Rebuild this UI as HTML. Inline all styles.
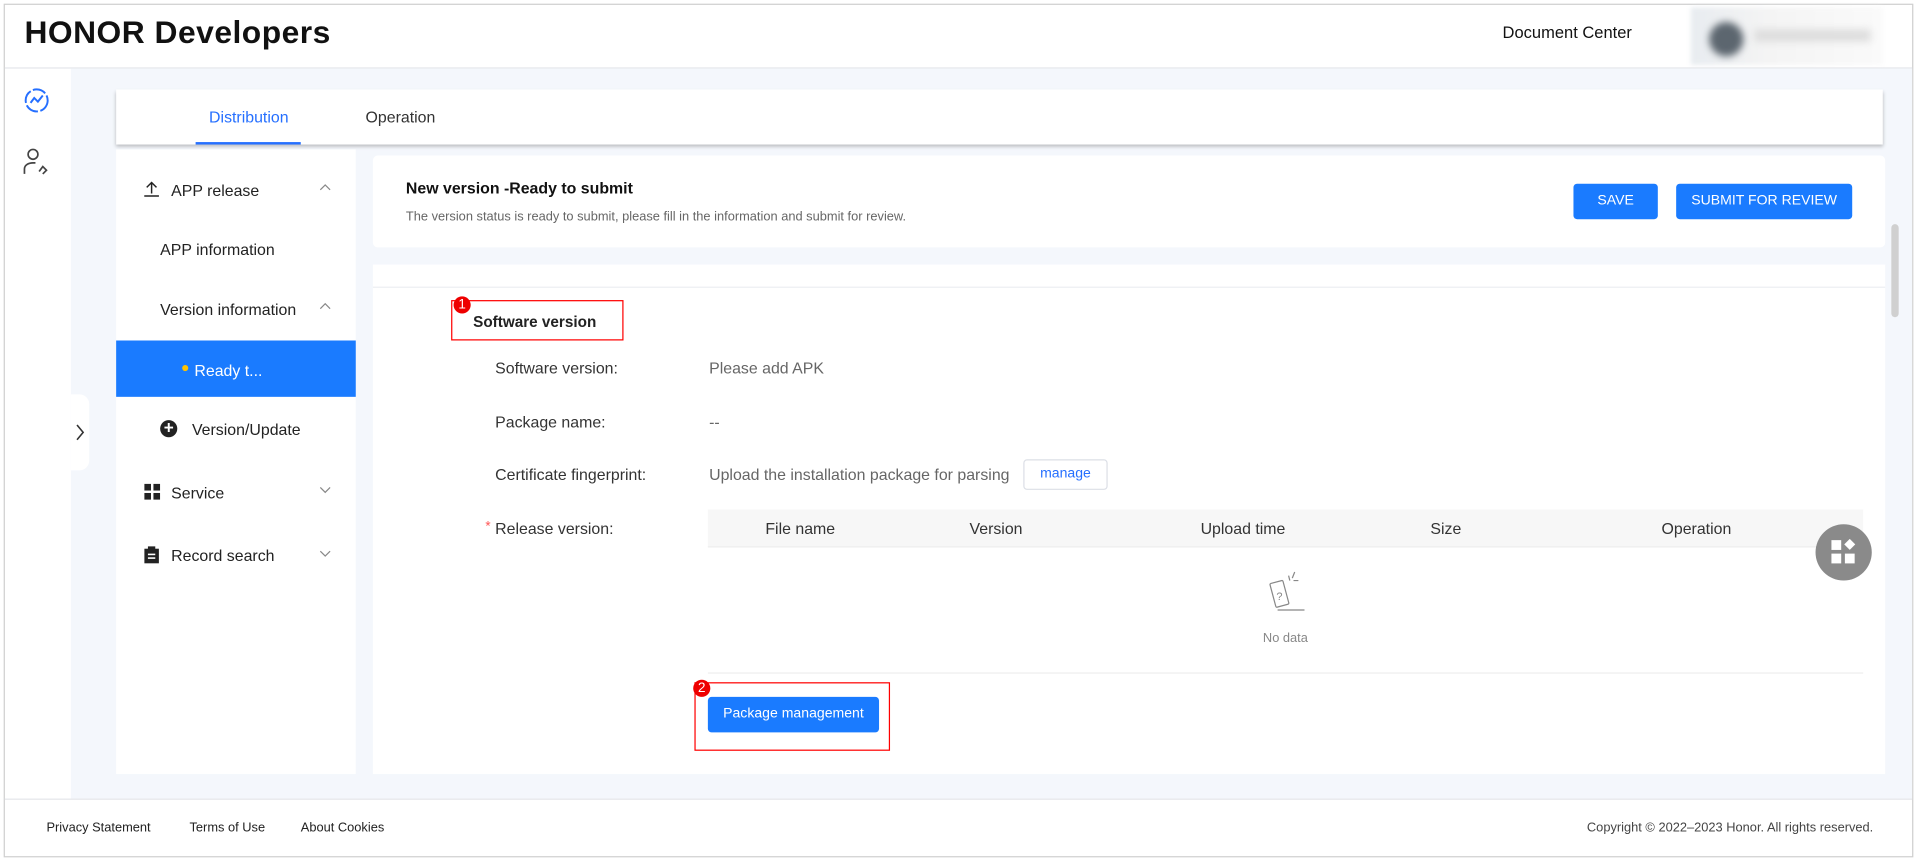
<!DOCTYPE html>
<html><head><meta charset="utf-8"><style>
*{margin:0;padding:0;box-sizing:border-box}
html,body{width:1917px;height:861px;overflow:hidden;background:#fff;font-family:"Liberation Sans",Arial,sans-serif}
#w{position:absolute;left:0;top:0;width:1568px;height:703px;transform:scale(1.22258,1.2248);transform-origin:0 0;background:#fff}
.a{position:absolute}
.t{position:absolute;white-space:nowrap;line-height:1}
</style></head><body><div id="w">
<div class="a" style="left:3px;top:3px;width:1562px;height:697px;border:1px solid #cfcfcf"></div>
<!-- header -->
<div class="t" style="left:20px;top:13px;font-size:26px;font-weight:bold;color:#111;letter-spacing:0.4px">HONOR Developers</div>
<div class="t" style="left:1229px;top:20px;font-size:13.5px;color:#111">Document Center</div>
<div class="a" style="left:1383px;top:6px;width:157px;height:47px;background:linear-gradient(90deg,#e8ecf0,#f4f4f4 40%,#fafafa);filter:blur(2px)"></div>
<div class="a" style="left:1398px;top:18px;width:28px;height:28px;border-radius:50%;background:#5c666f;filter:blur(3px)"></div>
<div class="a" style="left:1435px;top:24px;width:95px;height:10px;background:#ddd;filter:blur(3px)"></div>
<div class="a" style="left:4px;top:55px;width:1560px;height:1px;background:#e4e6ea"></div>
<!-- main bg -->
<div class="a" style="left:58px;top:56px;width:1506px;height:596px;background:#f4f7fc"></div>
<!-- rail icons -->
<svg class="a" style="left:19px;top:70px" width="22" height="24" viewBox="0 0 22 24"><circle cx="11" cy="12" r="9" fill="none" stroke="#256fff" stroke-width="1.6" stroke-dasharray="11 2"/><path d="M6 14l3-4 3 3 4-5" fill="none" stroke="#256fff" stroke-width="1.6"/></svg>
<svg class="a" style="left:18px;top:120px" width="24" height="26" viewBox="0 0 24 26"><circle cx="9" cy="6" r="4" fill="none" stroke="#444" stroke-width="1.4"/><path d="M2 22v-4c0-3 3-5 7-5h2" fill="none" stroke="#444" stroke-width="1.4"/><path d="M14 20l3-4 3 3-3 3" fill="none" stroke="#444" stroke-width="1.4"/></svg>
<div class="a" style="left:58px;top:322px;width:15px;height:62px;background:#fff;border-radius:0 8px 8px 0"></div>
<svg class="a" style="left:62px;top:346px" width="8" height="14" viewBox="0 0 8 14"><path d="M1 1l5 6-5 6" fill="none" stroke="#333" stroke-width="1.3"/></svg>
<!-- tab bar -->
<div class="a" style="left:95px;top:73px;width:1445px;height:45px;background:#fff;box-shadow:0 2px 3px rgba(0,0,0,0.25)"></div>
<div class="t" style="left:171px;top:89px;font-size:13px;color:#256fff">Distribution</div>
<div class="a" style="left:160px;top:116px;width:86px;height:2px;background:#256fff"></div>
<div class="t" style="left:299px;top:89px;font-size:13px;color:#333">Operation</div>
<!-- left menu -->
<div class="a" style="left:95px;top:122px;width:196px;height:510px;background:#fff"></div>
<svg class="a" style="left:117px;top:147px" width="14" height="14" viewBox="0 0 14 14"><path d="M7 11V2M3 6l4-4 4 4M1 13h12" fill="none" stroke="#222" stroke-width="1.2"/></svg>
<div class="t" style="left:140px;top:149px;font-size:13px;color:#222">APP release</div>
<svg class="a" style="left:261px;top:150px" width="10" height="6" viewBox="0 0 10 6"><path d="M1 5l4-4 4 4" fill="none" stroke="#888" stroke-width="1"/></svg>
<div class="t" style="left:131px;top:197px;font-size:13px;color:#222">APP information</div>
<div class="t" style="left:131px;top:246px;font-size:13px;color:#222">Version information</div>
<svg class="a" style="left:261px;top:247px" width="10" height="6" viewBox="0 0 10 6"><path d="M1 5l4-4 4 4" fill="none" stroke="#888" stroke-width="1"/></svg>
<div class="a" style="left:95px;top:278px;width:196px;height:46px;background:#1a7bff"></div>
<div class="a" style="left:149px;top:298px;width:5px;height:5px;border-radius:50%;background:#ffc300"></div>
<div class="t" style="left:159px;top:296px;font-size:13px;color:#fff">Ready t...</div>
<div class="a" style="left:131px;top:343px;width:14px;height:14px;border-radius:50%;background:#222"></div>
<div class="t" style="left:133px;top:342px;width:10px;text-align:center;font-size:14px;font-weight:bold;color:#fff">+</div>
<div class="t" style="left:157px;top:344px;font-size:13px;color:#222">Version/Update</div>
<svg class="a" style="left:118px;top:395px" width="13" height="13" viewBox="0 0 13 13"><rect x="0" y="0" width="5.5" height="5.5" fill="#222"/><rect x="7.5" y="0" width="5.5" height="5.5" fill="#222"/><rect x="0" y="7.5" width="5.5" height="5.5" fill="#222"/><rect x="7.5" y="7.5" width="5.5" height="5.5" fill="#222"/></svg>
<div class="t" style="left:140px;top:396px;font-size:13px;color:#222">Service</div>
<svg class="a" style="left:261px;top:397px" width="10" height="6" viewBox="0 0 10 6"><path d="M1 1l4 4 4-4" fill="none" stroke="#888" stroke-width="1"/></svg>
<svg class="a" style="left:118px;top:446px" width="12" height="14" viewBox="0 0 12 14"><rect x="0" y="2" width="12" height="12" fill="#222"/><rect x="3" y="0" width="6" height="3" fill="#222"/><rect x="3" y="6" width="6" height="1.3" fill="#fff"/><rect x="3" y="9" width="6" height="1.3" fill="#fff"/></svg>
<div class="t" style="left:140px;top:447px;font-size:13px;color:#222">Record search</div>
<svg class="a" style="left:261px;top:449px" width="10" height="6" viewBox="0 0 10 6"><path d="M1 1l4 4 4-4" fill="none" stroke="#888" stroke-width="1"/></svg>
<!-- header card -->
<div class="a" style="left:305px;top:127px;width:1237px;height:75px;background:#fff;border-radius:4px"></div>
<div class="t" style="left:332px;top:147px;font-size:13px;font-weight:bold;color:#111">New version -Ready to submit</div>
<div class="t" style="left:332px;top:172px;font-size:10.5px;color:#666">The version status is ready to submit, please fill in the information and submit for review.</div>
<div class="a" style="left:1287px;top:150px;width:69px;height:29px;background:#1a7bff;border-radius:3px;color:#fff;font-size:11.5px;text-align:center;line-height:29px">SAVE</div>
<div class="a" style="left:1371px;top:150px;width:144px;height:29px;background:#1a7bff;border-radius:3px;color:#fff;font-size:11.5px;text-align:center;line-height:29px">SUBMIT FOR REVIEW</div>
<!-- content card -->
<div class="a" style="left:305px;top:216px;width:1237px;height:416px;background:#fff"></div>
<div class="a" style="left:305px;top:234px;width:1237px;height:1px;background:#eceef2"></div>
<div class="a" style="left:1547px;top:183px;width:6px;height:76px;background:#d0d0d0;border-radius:3px"></div>
<div class="a" style="left:369px;top:245px;width:141px;height:33px;border:1.5px solid #f00"></div>
<div class="a" style="left:371px;top:242px;width:14px;height:14px;border-radius:50%;background:#e00;color:#fff;font-size:11px;text-align:center;line-height:14px">1</div>
<div class="t" style="left:387px;top:257px;font-size:12.5px;font-weight:bold;color:#222">Software version</div>
<div class="t" style="left:405px;top:294px;font-size:13px;color:#333">Software version:</div>
<div class="t" style="left:580px;top:294px;font-size:13px;color:#666">Please add APK</div>
<div class="t" style="left:405px;top:338px;font-size:13px;color:#333">Package name:</div>
<div class="t" style="left:580px;top:338px;font-size:13px;color:#666">--</div>
<div class="t" style="left:405px;top:381px;font-size:13px;color:#333">Certificate fingerprint:</div>
<div class="t" style="left:580px;top:381px;font-size:13px;color:#666">Upload the installation package for parsing</div>
<div class="a" style="left:837px;top:375px;width:69px;height:25px;border:1px solid #dcdfe6;border-radius:3px;color:#256fff;font-size:11.5px;text-align:center;line-height:23px">manage</div>
<div class="t" style="left:397px;top:425px;font-size:11px;color:#f55">*</div>
<div class="t" style="left:405px;top:425px;font-size:13px;color:#333">Release version:</div>
<div class="a" style="left:579px;top:416px;width:945px;height:31px;background:#f7f7f7;border-bottom:1px solid #eee"></div>
<div class="t" style="left:626px;top:425px;font-size:13px;color:#333">File name</div>
<div class="t" style="left:793px;top:425px;font-size:13px;color:#333">Version</div>
<div class="t" style="left:982px;top:425px;font-size:13px;color:#333">Upload time</div>
<div class="t" style="left:1170px;top:425px;font-size:13px;color:#333">Size</div>
<div class="t" style="left:1359px;top:425px;font-size:13px;color:#333">Operation</div>
<svg class="a" style="left:1035px;top:463px" width="34" height="38" viewBox="0 0 34 38"><rect x="6" y="12" width="11" height="20" rx="1" transform="rotate(-15 11 22)" fill="none" stroke="#888" stroke-width="1"/><text x="9" y="27" font-size="9" fill="#888" font-family="Liberation Sans">?</text><path d="M19 7l1 4M24 4l-2 5M27 11h-4M10 35h22" stroke="#888" stroke-width="1"/></svg>
<div class="t" style="left:1033px;top:516px;font-size:10.5px;color:#888">No data</div>
<div class="a" style="left:579px;top:549px;width:945px;height:1px;background:#eee"></div>
<div class="a" style="left:568px;top:557px;width:160px;height:56px;border:1.5px solid #f00"></div>
<div class="a" style="left:567px;top:555px;width:14px;height:14px;border-radius:50%;background:#e00;color:#fff;font-size:11px;text-align:center;line-height:14px">2</div>
<div class="a" style="left:579px;top:569px;width:140px;height:29px;background:#1a7bff;border-radius:3px;color:#fff;font-size:11.5px;text-align:center;line-height:29px">Package management</div>
<div class="a" style="left:1485px;top:428px;width:46px;height:46px;border-radius:50%;background:#8a8a8a"></div>
<svg class="a" style="left:1497px;top:440px" width="22" height="22" viewBox="0 0 22 22"><rect x="1" y="1" width="8" height="8" fill="#fff"/><rect x="1" y="12" width="8" height="8" fill="#fff"/><rect x="12" y="12" width="8" height="8" fill="#fff"/><path d="M16 0l4.5 4.5L16 9l-4.5-4.5z" fill="#fff"/></svg>
<!-- footer -->
<div class="a" style="left:4px;top:652px;width:1560px;height:1px;background:#e4e6ea"></div>
<div class="t" style="left:38px;top:671px;font-size:10.5px;color:#222">Privacy Statement</div>
<div class="t" style="left:155px;top:671px;font-size:10.5px;color:#222">Terms of Use</div>
<div class="t" style="left:246px;top:671px;font-size:10.5px;color:#222">About Cookies</div>
<div class="t" style="left:1298px;top:671px;font-size:10.5px;color:#444">Copyright © 2022–2023 Honor. All rights reserved.</div>
</div></body></html>
